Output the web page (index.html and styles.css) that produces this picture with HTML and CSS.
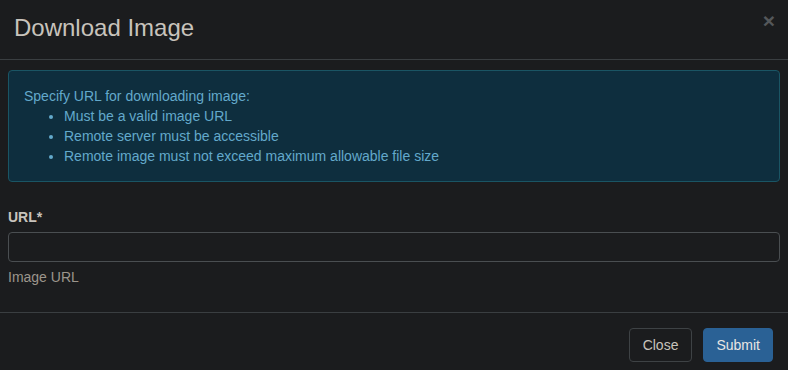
FILE: index.html
```html
<!DOCTYPE html>
<html lang="en">
<head>
    <meta charset="UTF-8">
    <title>Download Image</title>
    <link rel="stylesheet" href="styles.css">
</head>
<body>
    <div class="modal">
        <div class="modal-header">
            <h4 class="modal-title">Download Image</h4>
            <button class="close" type="button">&times;</button>
        </div>
        <div class="modal-body">
            <div class="alert">
                Specify URL for downloading image:
                <ul>
                    <li>Must be a valid image URL</li>
                    <li>Remote server must be accessible</li>
                    <li>Remote image must not exceed maximum allowable file size</li>
                </ul>
            </div>
            <div class="form-group">
                <label for="url">URL*</label>
                <input type="text" id="url" class="form-control">
                <p class="help-block">Image URL</p>
            </div>
        </div>
        <div class="modal-footer">
            <button class="btn btn-default" type="button">Close</button>
            <button class="btn btn-primary" type="button">Submit</button>
        </div>
    </div>
</body>
</html>
```

FILE: styles.css
```css
body {
    margin: 0;
    background-color: #1b1c1e;
    color: #c8c3bc;
    font-family: 'Liberation Sans', Arial, sans-serif;
    font-size: 14px;
    line-height: 20px;
}
.modal {
    width: 788px;
}
.modal-header {
    display: flex;
    justify-content: space-between;
    align-items: flex-start;
    padding: 12px 14px 0 14px;
    height: 47px;
    border-bottom: 1px solid #3a3e41;
}
.modal-title {
    margin: 0;
    font-size: 24px;
    font-weight: normal;
    line-height: 32px;
    color: #c8c3bc;
}
.close {
    margin-top: -1px;
    margin-right: -1px;
    padding: 0;
    background: none;
    border: none;
    font-family: 'Liberation Sans', Arial, sans-serif;
    font-size: 21px;
    font-weight: bold;
    line-height: 20px;
    color: #54575a;
    cursor: pointer;
}
.modal-body {
    padding: 10px 8px;
}
.alert {
    padding: 15px;
    margin-bottom: 20px;
    background-color: #0e2e3e;
    border: 1px solid #1a5564;
    border-radius: 4px;
    color: #63a9cb;
}
.alert ul {
    margin: 0;
    padding-left: 40px;
}
.form-group {
    margin-top: 25px;
    margin-bottom: 15px;
}
label {
    display: block;
    margin-bottom: 5px;
    font-weight: bold;
    color: #c8c3bc;
}
.form-control {
    display: block;
    box-sizing: border-box;
    width: 100%;
    height: 30px;
    padding: 4px 10px;
    background-color: #1b1c1e;
    border: 1px solid #4a4e51;
    border-radius: 4px;
    color: #c8c3bc;
    font-family: inherit;
    font-size: 14px;
}
.help-block {
    margin: 5px 0 0 0;
    color: #9b958c;
}
.modal-footer {
    display: flex;
    justify-content: flex-end;
    gap: 11px;
    padding: 15px 15px;
    border-top: 1px solid #3a3e41;
}
.btn {
    height: 34px;
    padding: 6px 12px;
    border-radius: 4px;
    font-family: inherit;
    font-size: 14px;
    line-height: 20px;
    cursor: pointer;
}
.btn-default {
    padding: 6px 13px;
    background-color: #1b1c1e;
    border: 1px solid #3e4245;
    color: #c8c3bc;
}
.btn-primary {
    background-color: #2a6195;
    border: 1px solid #2a6195;
    color: #e8e6e3;
}
```
